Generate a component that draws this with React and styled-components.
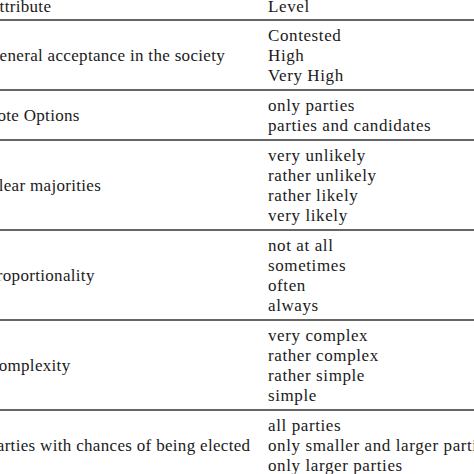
import React from 'react';
import styled, { createGlobalStyle } from 'styled-components';

const GlobalStyle = createGlobalStyle`
  html, body {
    margin: 0;
    padding: 0;
    background: #ffffff;
    overflow: hidden;
  }
  body {
    width: 474px;
    height: 474px;
  }
`;

const Table = styled.div`
  width: 487px;
  margin-left: -13px;
  margin-top: -3px;
  font-family: "Liberation Serif", "Times New Roman", serif;
  font-size: 17px;
  color: #1a1a1a;
  white-space: nowrap;
`;

const Row = styled.div`
  display: grid;
  grid-template-columns: 281px 1fr;
  align-items: center;
  padding: ${(p) => (p.$header ? '0 0 2px' : '5px 0 3px')};
  border-bottom: 2px solid #666666;
  line-height: 20px;
`;

const Attribute = styled.div`
  letter-spacing: 0.32px;
`;

const Levels = styled.div`
  display: flex;
  flex-direction: column;
  letter-spacing: 0.6px;
`;

const Level = styled.span`
  display: block;
  height: 20px;
`;

const rows = [
  { attr: 'General acceptance in the society', levels: ['Contested', 'High', 'Very High'] },
  { attr: 'Vote Options', levels: ['only parties', 'parties and candidates'] },
  { attr: 'Clear majorities', levels: ['very unlikely', 'rather unlikely', 'rather likely', 'very likely'] },
  { attr: 'Proportionality', levels: ['not at all', 'sometimes', 'often', 'always'] },
  { attr: 'Complexity', levels: ['very complex', 'rather complex', 'rather simple', 'simple'] },
  {
    attr: 'Parties with chances of being elected',
    levels: ['all parties', 'only smaller and larger parties', 'only larger parties'],
  },
];

const App = () => {
  return (
    <>
      <GlobalStyle />
      <Table>
        <Row $header>
          <Attribute>Attribute</Attribute>
          <Levels>
            <Level>Level</Level>
          </Levels>
        </Row>
        {rows.map((row) => (
          <Row key={row.attr}>
            <Attribute>{row.attr}</Attribute>
            <Levels>
              {row.levels.map((lvl) => (
                <Level key={lvl}>{lvl}</Level>
              ))}
            </Levels>
          </Row>
        ))}
      </Table>
    </>
  );
};

export default App;
